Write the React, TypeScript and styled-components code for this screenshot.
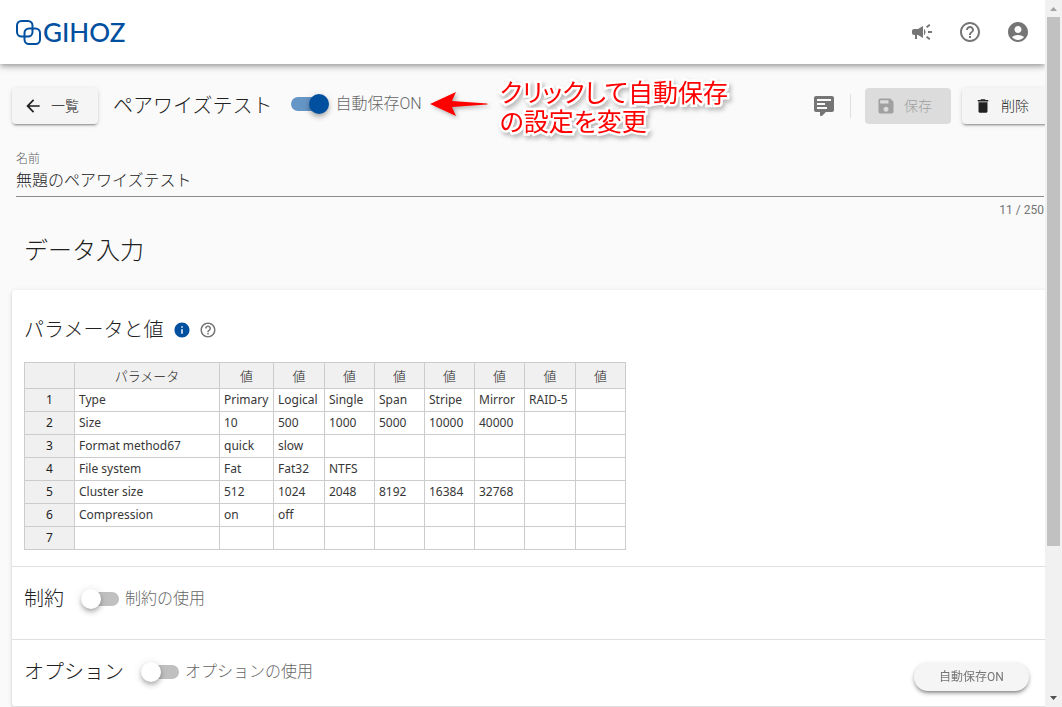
import React, { useState } from "react";
import styled, { createGlobalStyle } from "styled-components";
import {
  MdAccountCircle,
  MdArrowBack,
  MdCampaign,
  MdDelete,
  MdHelpOutline,
  MdInfo,
  MdSave,
} from "react-icons/md";

const GlobalStyle = createGlobalStyle`
  * { box-sizing: border-box; }
  body {
    margin: 0;
    background: #fafafa;
    color: #212121;
    font-family: Roboto, "Noto Sans CJK JP", sans-serif;
    font-weight: 300;
    font-size: 16px;
    line-height: 24px;
  }
  button, input { font: inherit; color: inherit; }
`;

const Window = styled.div`
  display: grid;
  grid-template-columns: minmax(0, 1fr) 17px;
  height: 100vh;
  overflow: hidden;
`;

const Page = styled.div`
  display: flex;
  flex-direction: column;
  overflow: hidden;
`;

const Header = styled.header`
  flex: none;
  display: flex;
  align-items: center;
  justify-content: space-between;
  height: 64px;
  padding: 0 3px 0 16px;
  background: #fff;
  z-index: 1;
  box-shadow: 0 2px 4px -1px rgba(0, 0, 0, 0.2), 0 4px 5px rgba(0, 0, 0, 0.14),
    0 1px 10px rgba(0, 0, 0, 0.12);
`;

const Brand = styled.a`
  display: flex;
  align-items: center;
  gap: 1px;
  color: #01509f;
  text-decoration: none;
  font-family: Lato, sans-serif;
  font-weight: 500;
  font-size: 26px;
`;

const Actions = styled.nav`
  display: flex;
`;

const IconButton = styled.button<{ $size?: number }>`
  display: grid;
  place-items: center;
  width: ${(p) => p.$size ?? 48}px;
  height: ${(p) => p.$size ?? 48}px;
  padding: 0;
  border: 0;
  background: none;
  color: #757575;
`;

const Main = styled.main`
  flex: none;
  margin-right: -3px;
  padding: 24px 0 0 12px;
`;

const Toolbar = styled.div`
  display: flex;
  align-items: center;
  height: 36px;
`;

const Button = styled.button`
  flex: none;
  display: flex;
  align-items: center;
  gap: 8px;
  width: 86px;
  height: 36px;
  padding: 0 0 0 11px;
  border: 0;
  border-radius: 4px;
  background: #f5f5f5;
  font-size: 14px;
  box-shadow: 0 3px 1px -2px rgba(0, 0, 0, 0.2), 0 2px 2px rgba(0, 0, 0, 0.14),
    0 1px 5px rgba(0, 0, 0, 0.12);
  &:disabled {
    background: #dcdcdc;
    color: #a0a0a0;
    box-shadow: none;
  }
`;

const ButtonIcon = styled.span`
  display: grid;
  place-items: center;
  width: 20px;
  height: 20px;
`;

const Title = styled.h1`
  margin: 0 19px 0 15px;
  font-size: 20px;
  font-weight: 300;
  white-space: nowrap;
`;

const AutoSave = styled.div`
  display: flex;
  align-items: center;
  padding-bottom: 4px;
`;

const SwitchLabel = styled.label`
  display: flex;
  align-items: center;
  gap: 6px;
  color: #666;
  white-space: nowrap;
`;

const SwitchInput = styled.input`
  appearance: none;
  display: grid;
  align-items: center;
  width: 38px;
  height: 20px;
  margin: 0;
  &::before,
  &::after {
    content: "";
    grid-area: 1 / 1;
  }
  &::before {
    justify-self: end;
    width: 36px;
    height: 14px;
    border-radius: 7px;
    background: #c0c0c0;
  }
  &::after {
    justify-self: start;
    width: 20px;
    height: 20px;
    border-radius: 50%;
    background: #fff;
    box-shadow: 0 2px 4px -1px rgba(0, 0, 0, 0.2), 0 4px 5px rgba(0, 0, 0, 0.14),
      0 1px 10px rgba(0, 0, 0, 0.12);
  }
  &:checked::before {
    justify-self: start;
    background: #6696c6;
  }
  &:checked::after {
    justify-self: end;
    background: #01509f;
  }
`;

const Callout = styled.aside`
  display: flex;
  align-items: center;
  gap: 12px;
  margin-left: 8px;
`;

const Arrow = styled.svg`
  flex: none;
  overflow: visible;
  filter: drop-shadow(2px 2px 2px rgba(0, 0, 0, 0.3));
`;

const CalloutText = styled.p`
  margin: 8px 0 0;
  color: #f00;
  font-size: 25px;
  font-weight: 400;
  line-height: 29px;
  font-feature-settings: "palt";
  white-space: nowrap;
  -webkit-text-stroke: 5px #fff;
  paint-order: stroke fill;
  filter: drop-shadow(2px 3px 2px rgba(0, 0, 0, 0.25));
`;

const ToolbarEnd = styled.div`
  display: flex;
  align-items: center;
  gap: 11px;
  margin-left: auto;
`;

const Separator = styled.span`
  width: 1px;
  height: 24px;
  margin: 0 3px 0 -3px;
  background: #e0e0e0;
`;

const Field = styled.div`
  display: flex;
  flex-direction: column;
  margin: 27px 4px 0;
`;

const FieldLabel = styled.label`
  color: #666;
  font-size: 12px;
  line-height: 16px;
`;

const FieldInput = styled.input`
  height: 30px;
  padding: 0 0 6px;
  border: 0;
  border-bottom: 1px solid #8c8c8c;
  border-radius: 0;
  background: none;
`;

const Counter = styled.span`
  align-self: flex-end;
  margin-top: 5px;
  color: #757575;
  font-size: 12px;
  font-weight: 400;
  line-height: 16px;
`;

const PageHeading = styled.h2`
  margin: 17px 12px 23px;
  font-size: 24px;
  font-weight: 300;
  line-height: 32px;
`;

const Card = styled.div`
  border-radius: 4px;
  background: #fff;
  box-shadow: 0 3px 1px -2px rgba(0, 0, 0, 0.2), 0 2px 2px rgba(0, 0, 0, 0.14),
    0 1px 5px rgba(0, 0, 0, 0.12);
`;

const Section = styled.section<{ $top: number; $bottom: number }>`
  padding: ${(p) => p.$top}px 12px ${(p) => p.$bottom}px;
  border-bottom: 1px solid #e0e0e0;
`;

const SectionHead = styled.div<{ $gap: number }>`
  display: flex;
  align-items: center;
  gap: ${(p) => p.$gap}px;
  height: 32px;
`;

const HeadIcons = styled.div`
  display: flex;
  gap: 8px;
`;

const SectionTitle = styled.h3`
  margin: 0;
  font-size: 20px;
  font-weight: 300;
  line-height: 32px;
  white-space: nowrap;
`;

const ParamTable = styled.table`
  width: 602px;
  margin-top: 16px;
  border-collapse: collapse;
  table-layout: fixed;
  color: #373737;
  font-family: "Noto Sans", "Noto Sans CJK JP", sans-serif;
  font-size: 12px;
  font-weight: 400;
  line-height: 22px;
  white-space: nowrap;
  th, td {
    height: 23px;
    padding: 0 4px;
    border: 1px solid #ccc;
    text-align: left;
  }
  th {
    padding: 0;
    background: #f0f0f0;
    color: #222;
    font-weight: 400;
    text-align: center;
  }
  thead th {
    height: 26px;
    font-size: 13px;
    font-weight: 300;
  }
`;

const StatusChip = styled.button`
  position: fixed;
  right: 33px;
  bottom: 16px;
  width: 115px;
  height: 28px;
  padding: 0;
  border: 0;
  border-radius: 14px;
  background: #f5f5f5;
  color: #757575;
  font-size: 12px;
  font-weight: 400;
  box-shadow: 0 3px 3px -2px rgba(0, 0, 0, 0.3), 0 3px 4px rgba(0, 0, 0, 0.2),
    0 1px 5px rgba(0, 0, 0, 0.14);
`;

const ScrollTrack = styled.div`
  display: flex;
  flex-direction: column;
  align-items: center;
  background: #f1f1f1;
`;

const ScrollThumb = styled.div`
  flex: 529;
  width: 13px;
  background: #c1c1c1;
`;

const ScrollRest = styled.div`
  flex: 144;
`;

const LogoMark = () => (
  <svg width="26" height="25" viewBox="0 0 26 25" fill="none" stroke="currentColor" strokeWidth="2" aria-hidden="true">
    <rect x="1" y="1" width="15.500" height="15.500" rx="4.500" />
    <rect x="8.500" y="8.500" width="15.500" height="15.500" rx="4.500" />
  </svg>
);

const CommentIcon = () => (
  <svg width="24" height="24" viewBox="0 0 24 24" fill="currentColor" aria-hidden="true">
    <path d="M9 22a1 1 0 0 1-1-1v-3H4a2 2 0 0 1-2-2V4c0-1.110.9-2 2-2h16a2 2 0 0 1 2 2v12a2 2 0 0 1-2 2h-6.100l-3.700 3.710c-.2.190-.450.290-.7.290H9M5 5v2h14V5H5m0 4v2h8V9H5m0 4v2h10v-2H5z" />
  </svg>
);

const widths = [50, 145, 54, 51, 50, 50, 50, 50, 51, 50];

const rows = [
  ["Type", "Primary", "Logical", "Single", "Span", "Stripe", "Mirror", "RAID-5", ""],
  ["Size", "10", "500", "1000", "5000", "10000", "40000", "", ""],
  ["Format method67", "quick", "slow", "", "", "", "", "", ""],
  ["File system", "Fat", "Fat32", "NTFS", "", "", "", "", ""],
  ["Cluster size", "512", "1024", "2048", "8192", "16384", "32768", "", ""],
  ["Compression", "on", "off", "", "", "", "", "", ""],
  ["", "", "", "", "", "", "", "", ""],
];

function Switch({ text, initial = false }: { text: string; initial?: boolean }) {
  const [on, setOn] = useState(initial);
  return (
    <SwitchLabel>
      <SwitchInput type="checkbox" checked={on} onChange={(e) => setOn(e.target.checked)} />
      {text}
    </SwitchLabel>
  );
}

export default function App() {
  const [name, setName] = useState("無題のペアワイズテスト");
  return (
    <Window lang="ja">
      <GlobalStyle />
      <Page>
        <Header>
          <Brand href="#">
            <LogoMark />
            GIHOZ
          </Brand>
          <Actions>
            <IconButton aria-label="お知らせ"><MdCampaign size={24} /></IconButton>
            <IconButton aria-label="ヘルプ"><MdHelpOutline size={24} /></IconButton>
            <IconButton aria-label="アカウント"><MdAccountCircle size={24} /></IconButton>
          </Actions>
        </Header>
        <Main>
          <Toolbar>
            <Button><ButtonIcon><MdArrowBack size={20} /></ButtonIcon>一覧</Button>
            <Title>ペアワイズテスト</Title>
            <AutoSave>
              <Switch text="自動保存ON" initial />
              <Callout>
                <Arrow width="58" height="24" viewBox="0 0 58 24" fill="#f00" aria-hidden="true">
                  <path d="M0 12 26 0 22 9 57 11.500a.5.5 0 0 1 0 1L22 15l4 9Z" />
                </Arrow>
                <CalloutText>
                  クリックして自動保存
                  <br />
                  の設定を変更
                </CalloutText>
              </Callout>
            </AutoSave>
            <ToolbarEnd>
              <IconButton $size={36} aria-label="コメント"><CommentIcon /></IconButton>
              <Separator />
              <Button disabled><ButtonIcon><MdSave size={20} /></ButtonIcon>保存</Button>
              <Button><ButtonIcon><MdDelete size={18} /></ButtonIcon>削除</Button>
            </ToolbarEnd>
          </Toolbar>
          <Field>
            <FieldLabel htmlFor="test-name">名前</FieldLabel>
            <FieldInput id="test-name" value={name} onChange={(e) => setName(e.target.value)} />
            <Counter>{name.length} / 250</Counter>
          </Field>
          <PageHeading>データ入力</PageHeading>
          <Card>
            <Section $top={24} $bottom={16}>
              <SectionHead $gap={10}>
                <SectionTitle>パラメータと値</SectionTitle>
                <HeadIcons>
                  <IconButton $size={18} aria-label="情報"><MdInfo size={18} color="#01509f" /></IconButton>
                  <IconButton $size={18} aria-label="ヘルプ"><MdHelpOutline size={18} /></IconButton>
                </HeadIcons>
              </SectionHead>
              <ParamTable>
                <colgroup>
                  {widths.map((w, i) => <col key={i} width={w} />)}
                </colgroup>
                <thead>
                  <tr>
                    <th />
                    <th scope="col">パラメータ</th>
                    {rows[0].slice(1).map((_, i) => <th key={i} scope="col">値</th>)}
                  </tr>
                </thead>
                <tbody>
                  {rows.map((cells, r) => (
                    <tr key={r}>
                      <th scope="row">{r + 1}</th>
                      {cells.map((cell, c) => <td key={c}>{cell}</td>)}
                    </tr>
                  ))}
                </tbody>
              </ParamTable>
            </Section>
            <Section $top={16} $bottom={24}>
              <SectionHead $gap={17}>
                <SectionTitle>制約</SectionTitle>
                <Switch text="制約の使用" />
              </SectionHead>
            </Section>
            <Section $top={16} $bottom={18}>
              <SectionHead $gap={17}>
                <SectionTitle>オプション</SectionTitle>
                <Switch text="オプションの使用" />
              </SectionHead>
            </Section>
          </Card>
        </Main>
      </Page>
      <ScrollTrack aria-hidden="true">
        <svg width="17" height="17" fill="#a3a3a3"><path d="M5 11h7L8.500 7Z" /></svg>
        <ScrollThumb />
        <ScrollRest />
        <svg width="17" height="17" fill="#505050"><path d="M5 6h7L8.500 10Z" /></svg>
      </ScrollTrack>
      <StatusChip>自動保存ON</StatusChip>
    </Window>
  );
}
